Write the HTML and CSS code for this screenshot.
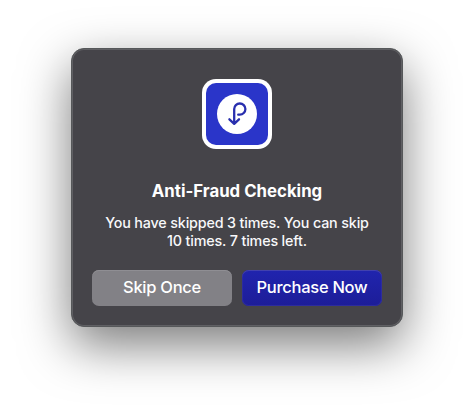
FILE: index.html
```html
<!DOCTYPE html>
<html lang="en">
<head>
    <meta charset="UTF-8">
    <meta name="viewport" content="width=device-width, initial-scale=1.0">
    <title>Anti-Fraud Checking</title>
    <link rel="stylesheet" href="styles.css">
</head>
<body>
    <div class="dialog">
        <svg class="app-icon" viewBox="0 0 70 70">
            <rect width="70" height="70" rx="14" fill="#fff"/>
            <rect x="4" y="4" width="62" height="62" rx="10" fill="#2a35c9"/>
            <circle cx="35" cy="35" r="20" fill="#fff"/>
            <path d="M36.2 35.7h1.6a5.6 5.6 0 1 0-5.6-5.6v14.4M27.4 40.3l4.8 4.5 4.8-4.5" fill="none" stroke="#292fae" stroke-width="2.3" stroke-linecap="round" stroke-linejoin="round"/>
        </svg>
        <h1 class="title">Anti-Fraud Checking</h1>
        <p class="message">You have skipped 3 times. You can skip<br>10 times. 7 times left.</p>
        <div class="buttons">
            <button class="skip">Skip Once</button>
            <button class="purchase">Purchase Now</button>
        </div>
    </div>
</body>
</html>
```

FILE: styles.css
```css
* {
    margin: 0;
    padding: 0;
    box-sizing: border-box;
    font-family: Inter, 'Liberation Sans', sans-serif;
}

body {
    height: 420px;
    padding-top: 48px;
    background-color: #fff;
    overflow: hidden;
}

.dialog {
    width: 332px;
    height: 279px;
    margin: 0 auto;
    padding: 30px 20px 20px;
    display: flex;
    flex-direction: column;
    align-items: center;
    background-color: #454449;
    border: 1px solid #56585a;
    border-radius: 13px;
    box-shadow: inset 0 0 0 1px #606064, 0 18px 50px rgba(0, 0, 0, 0.52);
    color: #f8f8fa;
}

.app-icon {
    width: 70px;
    height: 70px;
}

.title {
    margin-top: 32px;
    font-size: 16.8px;
    line-height: 20px;
    font-weight: 700;
    white-space: nowrap;
    color: #fff;
}

.message {
    margin-top: 13px;
    font-size: 14.3px;
    line-height: 18px;
    font-weight: 500;
    letter-spacing: -0.15px;
    text-align: center;
    white-space: nowrap;
}

.buttons {
    display: grid;
    grid-template-columns: 140px 140px;
    gap: 10px;
    margin-top: 20px;
}

button {
    height: 36px;
    border: none;
    border-radius: 7px;
    padding-bottom: 2px;
    font-size: 16.5px;
    font-weight: 500;
    letter-spacing: -0.28px;
    color: #fff;
}

.skip {
    background-color: #828186;
    box-shadow: inset 0 1px #8f8e93;
}

.purchase {
    background: linear-gradient(#2024ae, #1d1d98);
    box-shadow: inset 0 1px #4241ae, inset 0 0 0 1px #2c2b9f;
}
```
